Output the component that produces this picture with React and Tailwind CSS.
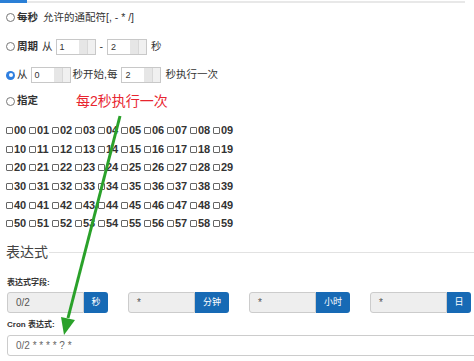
import React from 'react';

const NUMS = Array.from({ length: 60 }, (_, i) => String(i).padStart(2, '0'));

function Radio({ checked = false }) {
  return checked ? (
    <span className="w-[9px] h-[9px] rounded-full bg-[#2f7fe0] flex items-center justify-center shrink-0">
      <span className="w-[4px] h-[4px] rounded-full bg-white" />
    </span>
  ) : (
    <span className="w-[9px] h-[9px] rounded-full border border-[#777] bg-white shrink-0" />
  );
}

function NumInput({ value }) {
  return (
    <span className="flex h-[16px] w-[40px] border border-[#c8c8c8] bg-white">
      <span className="flex-1 pl-[3px] text-[9px] leading-[14px] text-[#333]">{value}</span>
      <span className="w-[8px] bg-[#e6e6e6]" />
      <span className="w-[8px] bg-[#f0f0f0] border-l border-[#d8d8d8]" />
    </span>
  );
}

function Field({ value, label, btnW }) {
  return (
    <div className="flex h-[21px]">
      <div className="flex-1 flex items-center bg-[#eee] border border-[#ccc] rounded-l-[3px] pl-[8px] text-[10px] text-[#555]">
        {value}
      </div>
      <div className={`${btnW} flex items-center justify-center bg-[#176ab5] rounded-r-[3px] text-white text-[9px]`}>
        {label}
      </div>
    </div>
  );
}

export default function App() {
  return (
    <div className="relative w-[474px] h-[361px] overflow-hidden bg-white text-[#333] font-['Liberation_Sans','Noto_Sans_CJK_SC',sans-serif]">
      {/* tab underline */}
      <div className="flex h-[3px]">
        <div className="w-[27px] bg-[#2a7fd6]" />
        <div className="w-[438px] mt-[1px] h-[2px] bg-[#e8e8e8]" />
      </div>

      <div className="pl-[6px]">
        <div className="flex items-center h-[29px] text-[10.5px]">
          <Radio />
          <span className="ml-[2px] font-bold">每秒</span>
          <span className="ml-[5px]">允许的通配符[, - * /]</span>
        </div>
        <div className="flex items-center h-[29px] text-[10.5px]">
          <Radio />
          <span className="ml-[2px] font-bold">周期</span>
          <span className="ml-[4px] mr-[3px]">从</span>
          <NumInput value="1" />
          <span className="mx-[4px]">-</span>
          <NumInput value="2" />
          <span className="ml-[4px]">秒</span>
        </div>
        <div className="flex items-center h-[28px] text-[10.5px]">
          <Radio checked />
          <span className="ml-[2px] mr-[3px]">从</span>
          <NumInput value="0" />
          <span className="ml-[2px] mr-[4px]">秒开始,每</span>
          <NumInput value="2" />
          <span className="ml-[4px]">秒执行一次</span>
        </div>
        <div className="flex items-center h-[24px] text-[10.5px]">
          <Radio />
          <span className="ml-[2px] font-bold">指定</span>
          <span className="ml-[38px] text-[14px] text-[#e8252f]">每2秒执行一次</span>
        </div>

        <div className="mt-[8px] grid grid-cols-[repeat(10,23px)] auto-rows-[18.7px]">
          {NUMS.map((n) => (
            <div key={n} className="flex items-center">
              <span className="w-[7px] h-[7px] border border-[#666] rounded-[1px] shrink-0" />
              <span className="ml-[1px] text-[11px] font-bold leading-none">{n}</span>
            </div>
          ))}
        </div>

        <div className="mt-[9px] flex items-center h-[20px]">
          <span className="text-[14px] text-[#444] pr-[1px]">表达式</span>
          <span className="flex-1 h-px bg-[#e2e2e2]" />
        </div>

        <div className="mt-[15px] h-[12px] leading-[12px] text-[8px] font-bold ml-[1px]">表达式字段:</div>
        <div className="mt-[3px] ml-[1px] grid grid-cols-[repeat(4,101px)] gap-x-[20px]">
          <Field value="0/2" label="秒" btnW="w-[24px]" />
          <Field value="*" label="分钟" btnW="w-[34px]" />
          <Field value="*" label="小时" btnW="w-[34px]" />
          <Field value="*" label="日" btnW="w-[24px]" />
        </div>

        <div className="mt-[6px] h-[12px] leading-[12px] text-[8px] font-bold ml-[1px]">Cron 表达式:</div>
        <div className="mt-[4px] ml-[1px] w-[500px] h-[21px] flex items-center border border-[#ccc] rounded-[3px] pl-[8px] text-[10px] text-[#666]">
          0/2 * * * * ? *
        </div>
      </div>

      {/* green annotation arrow */}
      <svg className="absolute left-0 top-0 pointer-events-none" width="474" height="361">
        <line x1="120" y1="116" x2="68" y2="318" stroke="#2aa12a" strokeWidth="3" />
        <polygon points="64,335 75,320 61,317" fill="#2aa12a" />
      </svg>
    </div>
  );
}
